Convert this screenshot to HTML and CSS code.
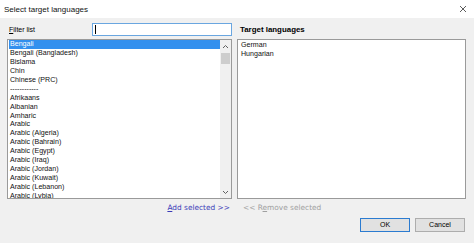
FILE: index.html
```html
<!DOCTYPE html>
<html>
<head>
<meta charset="utf-8">
<link rel="stylesheet" href="styles.css">
</head>
<body>
<div class="window">
  <div class="titlebar">
    <span class="title">Select target languages</span>
    <svg class="close" width="8" height="8" viewBox="0 0 8 8"><path d="M1 1 L7 7 M7 1 L1 7" stroke="#333" stroke-width="0.8" fill="none"/></svg>
  </div>
  <div class="content">
    <div class="filter-row">
      <label class="label"><u>F</u>ilter list</label>
      <div class="input"><span class="caret"></span></div>
    </div>
    <div class="target-label">Target languages</div>

    <div class="listbox left">
      <div class="items">
        <div class="item selected">Bengali</div>
        <div class="item">Bengali (Bangladesh)</div>
        <div class="item">Bislama</div>
        <div class="item">Chin</div>
        <div class="item">Chinese (PRC)</div>
        <div class="item">------------</div>
        <div class="item">Afrikaans</div>
        <div class="item">Albanian</div>
        <div class="item">Amharic</div>
        <div class="item">Arabic</div>
        <div class="item">Arabic (Algeria)</div>
        <div class="item">Arabic (Bahrain)</div>
        <div class="item">Arabic (Egypt)</div>
        <div class="item">Arabic (Iraq)</div>
        <div class="item">Arabic (Jordan)</div>
        <div class="item">Arabic (Kuwait)</div>
        <div class="item">Arabic (Lebanon)</div>
        <div class="item">Arabic (Lybia)</div>
      </div>
      <div class="scrollbar">
        <svg class="arrow" width="7" height="5" viewBox="0 0 7 5"><path d="M1 4 L3.5 1.5 L6 4" stroke="#606060" stroke-width="1" fill="none"/></svg>
        <div class="track"><div class="thumb"></div></div>
        <svg class="arrow" width="7" height="5" viewBox="0 0 7 5"><path d="M1 1 L3.5 3.5 L6 1" stroke="#606060" stroke-width="1" fill="none"/></svg>
      </div>
    </div>

    <div class="listbox right">
      <div class="items plain">
        <div class="item">German</div>
        <div class="item">Hungarian</div>
      </div>
    </div>

    <div class="link add"><u>A</u>dd selected &gt;&gt;</div>
    <div class="link remove">&lt;&lt; R<u>e</u>move selected</div>
  </div>
  <div class="footer">
    <div class="button default">OK</div>
    <div class="button">Cancel</div>
  </div>
</div>
</body>
</html>
```

FILE: styles.css
```css
html, body {
  margin: 0;
  padding: 0;
}

body {
  width: 474px;
  height: 243px;
  overflow: hidden;
  font-family: "Liberation Sans", Arial, sans-serif;
  color: #000;
}

.window {
  width: 474px;
  height: 243px;
  background: #f0f0f0;
  display: flex;
  flex-direction: column;
}

.titlebar {
  height: 18px;
  background: #fff;
  display: flex;
  align-items: center;
  justify-content: space-between;
  padding: 0 7px 0 4px;
}

.title {
  font-size: 8px;
  color: #111;
}

.close {
  display: block;
}

.content {
  display: grid;
  grid-template-columns: 225px 229px;
  grid-template-rows: 13px 160px 11px;
  column-gap: 5px;
  row-gap: 3px;
  padding: 5px 8px 0 7px;
}

.filter-row {
  display: flex;
  align-items: center;
}

.label {
  font-size: 7px;
  padding-left: 2px;
  width: 84px;
}

.input {
  width: 137px;
  height: 11px;
  background: #fff;
  border: 1px solid #6aa6e0;
  display: flex;
  align-items: center;
  padding-left: 2px;
}

.caret {
  width: 1px;
  height: 9px;
  background: #000;
}

.target-label {
  font-size: 7.9px;
  font-weight: bold;
  padding-left: 3px;
  align-self: center;
}

.listbox {
  background: #fff;
  border: 1px solid #9a9a9a;
  display: flex;
  overflow: hidden;
}

.items {
  flex: 1;
  padding: 0 0 0 1px;
  overflow: hidden;
}

.items.plain {
  padding: 1px 0 0 2px;
}

.item {
  font-size: 7.1px;
  line-height: 8.95px;
  height: 8.95px;
  padding-left: 1px;
  white-space: nowrap;
  color: #111;
}

.item.selected {
  background: #3390ee;
  color: #fff;
}

.scrollbar {
  width: 11px;
  background: #f0f0f0;
  display: flex;
  flex-direction: column;
  align-items: center;
}

.arrow {
  display: block;
  margin: 4px 0 3px;
}

.track {
  flex: 1;
  width: 100%;
  padding: 1px 1px 0;
  box-sizing: border-box;
}

.thumb {
  height: 11px;
  background: #cdcdcd;
}

.link {
  font-family: "DejaVu Sans", Verdana, sans-serif;
  font-size: 7.4px;
  line-height: 11px;
}

.add {
  color: #3a3ab8;
  text-align: right;
  padding-right: 2px;
}

.remove {
  color: #a0a0a0;
  padding-left: 6px;
}

.footer {
  display: flex;
  justify-content: flex-end;
  gap: 5px;
  padding: 5px 9px 0 0;
}

.button {
  width: 48px;
  height: 12px;
  background: #e1e1e1;
  border: 1px solid #adadad;
  font-size: 7px;
  line-height: 12px;
  text-align: center;
}

.button.default {
  border-color: #2b7bd0;
}
```
